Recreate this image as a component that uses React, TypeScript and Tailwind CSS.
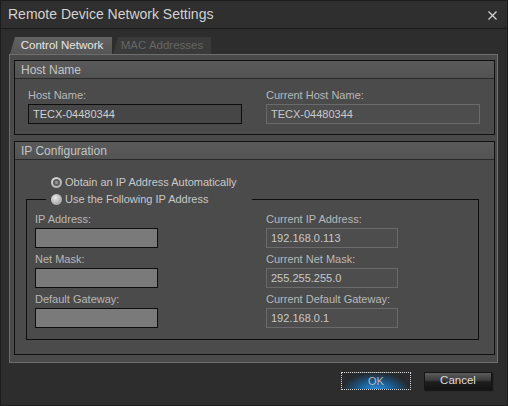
import React from "react";

const font = "[font-family:'Liberation_Sans',Arial,sans-serif]";

function Radio({ checked }: { checked?: boolean }) {
  if (checked) {
    return (
      <span className="w-[11px] h-[11px] rounded-full bg-[radial-gradient(circle_at_40%_35%,#e6e6e6,#9a9a9a)] flex items-center justify-center shrink-0">
        <span className="w-[7px] h-[7px] rounded-full bg-[#5e5e5e] flex items-center justify-center">
          <span className="w-[3px] h-[3px] rounded-full bg-[#9a9a9a]" />
        </span>
      </span>
    );
  }
  return (
    <span className="w-[11px] h-[11px] rounded-full bg-[radial-gradient(circle_at_40%_35%,#e8e8e8,#8c8c8c)] shrink-0" />
  );
}

function Group({ title, children }: { title: string; children: React.ReactNode }) {
  return (
    <div className="border border-[#111] bg-[#4b4b4b]">
      <div className="h-[18px] bg-[linear-gradient(#5a5a5a,#525252)] border-b border-[#2a2a2a] pl-[6px] pt-[1px] flex items-center text-[12px] text-[#c4c4c4]">
        {title}
      </div>
      {children}
    </div>
  );
}

function Label({ children }: { children: React.ReactNode }) {
  return <div className="h-[20px] pt-[3px] leading-[16px] text-[11px] text-[#b8b8b8]">{children}</div>;
}

function ReadBox({ value, w }: { value: string; w: string }) {
  return (
    <div className={`h-[20px] ${w} border border-[#6a6a6a] bg-[#4d4d4d] pl-[4px] text-[11px] leading-[18px] text-[#c8c8c8]`}>
      {value}
    </div>
  );
}

function GreyBox() {
  return <div className="h-[20px] w-[123px] border border-[#0e0e0e] bg-[#7a7a7a]" />;
}

export default function App() {
  return (
    <div className={`${font} w-[508px] h-[406px] bg-[#2d2d2d] border border-[#1c1c1c] flex flex-col overflow-hidden`}>
      {/* title bar */}
      <div className="h-[28px] shrink-0 flex items-center justify-between pl-[7px] pr-[10px] border-b border-[#1a1a1a] bg-[#2f2f2f]">
        <span className="text-[14px] text-[#d2d2d2]">Remote Device Network Settings</span>
        <svg width="9" height="9" viewBox="0 0 9 9" className="mt-[1px]">
          <path d="M0.5 0.5 L8.5 8.5 M8.5 0.5 L0.5 8.5" stroke="#d0d0d0" strokeWidth="1.3" />
        </svg>
      </div>

      <div className="pl-[8px] pr-[9px] pt-[8px] flex flex-col">
        {/* tabs */}
        <div className="h-[17px] flex items-end pl-[1px]">
          <div className="h-[17px] w-[102px] bg-[linear-gradient(#626262,#555555)] [clip-path:polygon(5px_0,100%_0,100%_100%,0_100%)] flex items-center justify-center text-[11.5px] text-[#e6e6e6] pl-[2px] pt-[1px]">
            Control Network
          </div>
          <div className="ml-[1px] h-[17px] w-[98px] bg-[#3a3a3a] [clip-path:polygon(5px_0,100%_0,100%_100%,0_100%)] flex items-center justify-center text-[11.5px] text-[#666] pt-[1px]">
            MAC Addresses
          </div>
        </div>

        {/* panel */}
        <div className="h-[309px] border border-[#6e6e6e] bg-[#4a4a4a] pl-[4px] pr-[2px] pt-[5px] flex flex-col gap-[6px]">
          <Group title="Host Name">
            <div className="pl-[13px] pt-[5px] pb-[10px] flex">
              <div className="w-[238px]">
                <Label>Host Name:</Label>
                <div className="h-[20px] w-[214px] border border-[#0e0e0e] bg-[#464646] pl-[4px] text-[11px] leading-[18px] text-[#cfcfcf]">
                  TECX-04480344
                </div>
              </div>
              <div>
                <Label>Current Host Name:</Label>
                <ReadBox value="TECX-04480344" w="w-[214px]" />
              </div>
            </div>
          </Group>

          <Group title="IP Configuration">
            <div className="pt-[15px] pb-[14px] pl-[11px] pr-[15px]">
              <div className="h-[14px] flex items-center gap-[3px] pl-[25px] text-[11px] text-[#c8c8c8]">
                <Radio checked />
                <span>Obtain an IP Address Automatically</span>
              </div>
              <fieldset className="mt-[2px] border border-[#0e0e0e] pl-[8px] pr-0 pt-[1px] pb-[11px] m-0">
                <legend className="ml-[11px] w-[206px] h-[16px] px-[5px] flex items-center gap-[3px] text-[11px] text-[#c8c8c8]">
                  <Radio />
                  <span>Use the Following IP Address</span>
                </legend>
                <div className="flex">
                  <div className="w-[231px]">
                    <Label>IP Address:</Label>
                    <GreyBox />
                    <Label>Net Mask:</Label>
                    <GreyBox />
                    <Label>Default Gateway:</Label>
                    <GreyBox />
                  </div>
                  <div>
                    <Label>Current IP Address:</Label>
                    <ReadBox value="192.168.0.113" w="w-[132px]" />
                    <Label>Current Net Mask:</Label>
                    <ReadBox value="255.255.255.0" w="w-[132px]" />
                    <Label>Current Default Gateway:</Label>
                    <ReadBox value="192.168.0.1" w="w-[132px]" />
                  </div>
                </div>
              </fieldset>
            </div>
          </Group>
        </div>

        {/* buttons */}
        <div className="mt-[9px] flex justify-end gap-[13px] pr-[6px]">
          <button className="h-[18px] w-[70px] border border-dotted border-[#d8d8d8] bg-[radial-gradient(ellipse_at_50%_110%,#2f93e0_0%,#1b5f96_35%,#252a30_70%,#2a2a2a_100%)] text-[11px] text-[#b8b8b8] leading-none">
            OK
          </button>
          <button className="h-[18px] w-[68px] border border-[#151515] bg-[linear-gradient(#5c5c5c,#3c3c3c_45%,#1e1e1e_55%,#141414)] text-[11.5px] text-[#dedede] leading-none shadow-[1px_1px_1px_rgba(0,0,0,0.5)]">
            Cancel
          </button>
        </div>
      </div>
    </div>
  );
}
